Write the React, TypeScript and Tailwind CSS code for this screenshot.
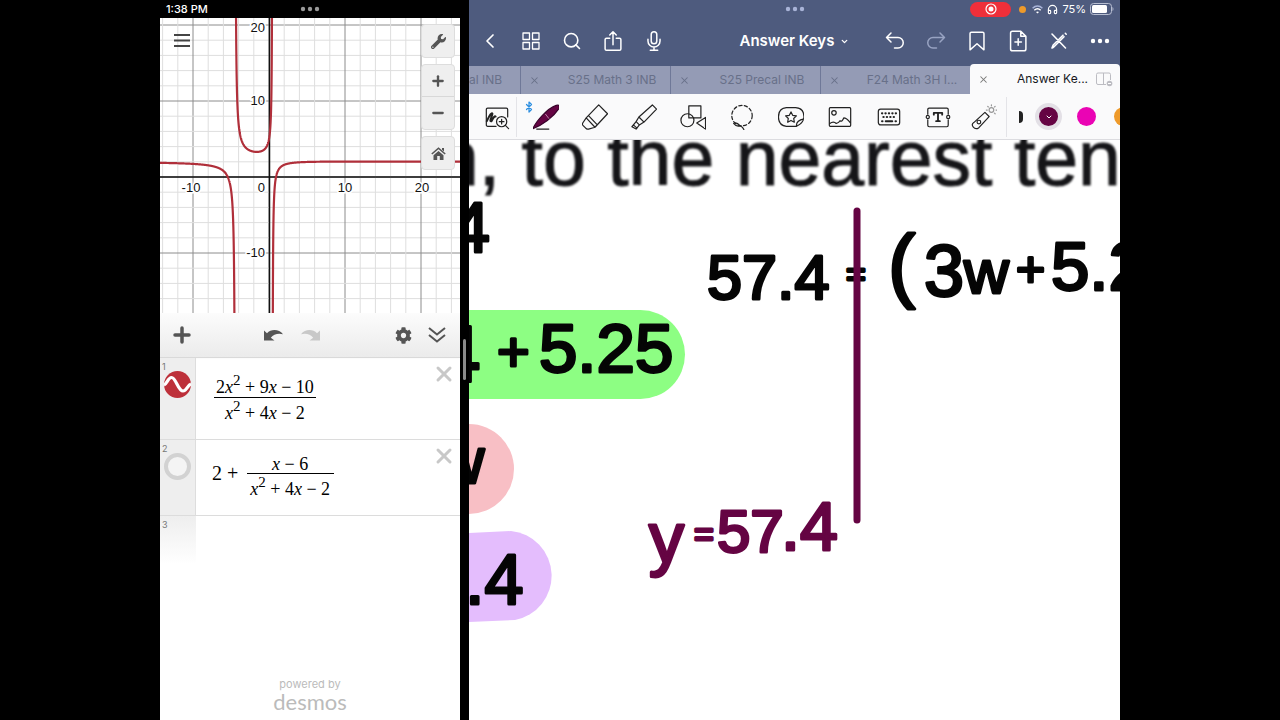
import type { ReactNode } from "react";
import {
  Bluetooth,
  ChevronDown,
  ChevronLeft,
  Headphones,
  Minus,
  Plus,
  Search,
  X,
} from "lucide-react";
import { FaCog, FaWrench } from "react-icons/fa";

// Graph paper: 10 units are 76px, origin sits at (109, 159)
const originX = 109;
const originY = 159;
const unit = 7.6;

const f = (x: number) => (2 * x * x + 9 * x - 10) / (x * x + 4 * x - 2);

function branch(from: number, to: number) {
  const points: string[] = [];
  for (let x = from; x <= to; x += 0.01) {
    const y = f(x);
    if (Math.abs(y) > 40) continue;
    points.push(`${(originX + x * unit).toFixed(2)},${(originY - y * unit).toFixed(2)}`);
  }
  return points.join(" ");
}

const branches = [branch(-15, -4.46), branch(-4.44, 0.44), branch(0.46, 26)];
const steps = Array.from({ length: 31 }, (_, i) => i - 10);

const labels = [
  { text: "20", x: 105, y: 14, anchor: "end" },
  { text: "10", x: 105, y: 87, anchor: "end" },
  { text: "-10", x: 105, y: 239, anchor: "end" },
  { text: "0", x: 105, y: 174, anchor: "end" },
  { text: "-10", x: 31, y: 174, anchor: "middle" },
  { text: "10", x: 185, y: 174, anchor: "middle" },
  { text: "20", x: 262, y: 174, anchor: "middle" },
] as const;

function Graph() {
  return (
    <svg viewBox="0 0 300 295" className="block w-full bg-white">
      {steps.map((i) => {
        const major = i % 5 === 0;
        const gx = originX + i * 2 * unit;
        const gy = originY + i * 2 * unit;
        return (
          <g key={i} stroke={major ? "#8c8c8c" : "#dedede"} strokeWidth="1">
            <line x1={gx} x2={gx} y1="0" y2="295" />
            <line x1="0" x2="300" y1={gy} y2={gy} />
          </g>
        );
      })}
      <line x1={originX + 0.5} x2={originX + 0.5} y1="0" y2="295" stroke="#111" strokeWidth="1.5" />
      <line x1="0" x2="300" y1={originY} y2={originY} stroke="#111" strokeWidth="1.5" />
      {labels.map((l) => (
        <text
          key={`${l.text}${l.x}${l.y}`}
          x={l.x}
          y={l.y}
          textAnchor={l.anchor}
          className="font-['Liberation_Sans'] text-[13px]"
          fill="#111"
          stroke="#fff"
          strokeWidth="3"
          paintOrder="stroke"
        >
          {l.text}
        </text>
      ))}
      {branches.map((points, i) => (
        <polyline key={i} points={points} fill="none" stroke="#b02f3a" strokeWidth="2.2" />
      ))}
    </svg>
  );
}

function GraphButton({ label, children }: { label: string; children: ReactNode }) {
  return (
    <button aria-label={label} className="flex h-8 w-8 items-center justify-center text-[#555]">
      {children}
    </button>
  );
}

function CurvedArrow({ flip = false, color }: { flip?: boolean; color: string }) {
  return (
    <svg width="20" height="12" viewBox="0 0 20 12">
      <path
        d={
          flip
            ? "M20 1.500V11.500H9.500L13.200 8.700C10.500 5.300 6 3.800 1 5.200C5 -.2 13 -.3 17 4.200Z"
            : "M0 1.500V11.500H10.500L6.800 8.700C9.500 5.300 14 3.800 19 5.200C15 -.2 7 -.3 3 4.200Z"
        }
        fill={color}
      />
    </svg>
  );
}

function Calculator() {
  return (
    <section className="flex min-h-screen flex-col bg-white">
      <header className="grid h-[18px] grid-cols-[1fr_auto_1fr] items-center bg-black px-1.5 text-[11px] font-medium text-white">
        <span>1:38 PM</span>
        <MoreDots className="text-[#999]" />
      </header>

      <div className="relative">
        <Graph />
        <button aria-label="Menu" className="absolute left-3.5 top-4">
          <svg width="16" height="13" viewBox="0 0 16 13" stroke="#444" strokeWidth="2">
            <path d="M0 1h16M0 6.500h16M0 12h16" />
          </svg>
        </button>
        <div className="absolute right-[5px] top-1.5 flex flex-col gap-1.5">
          <div className="rounded border border-[#ddd] bg-[#efefef]">
            <GraphButton label="Graph settings">
              <FaWrench size={15} />
            </GraphButton>
          </div>
          <div className="divide-y divide-[#d8d8d8] rounded border border-[#ddd] bg-[#efefef]">
            <GraphButton label="Zoom in">
              <Plus size={16} strokeWidth={3.5} />
            </GraphButton>
            <GraphButton label="Zoom out">
              <Minus size={16} strokeWidth={3.5} />
            </GraphButton>
          </div>
          <div className="rounded border border-[#ddd] bg-[#efefef]">
            <GraphButton label="Default view">
              <svg width="15" height="13" viewBox="0 0 15 13">
                <path d="M.8 7 7.500 1.200 14.200 7" fill="none" stroke="#555" strokeWidth="1.600" />
                <path d="M11 1h2v3.500l-2-1.700ZM7.500 4 2.500 8.300V13h3.700V9h2.600v4h3.700V8.300Z" fill="#555" />
              </svg>
            </GraphButton>
          </div>
        </div>
      </div>

      <div className="flex h-[45px] items-center border-b border-[#d9d9d9] bg-linear-to-b from-[#fcfcfc] to-[#ebebeb] px-2.5 text-[#555] shadow-[0_-2px_4px_rgba(0,0,0,0.15)]">
        <div className="flex flex-1">
          <button aria-label="Add item">
            <Plus size={24} strokeWidth={3.5} />
          </button>
        </div>
        <div className="flex gap-4 pr-8">
          <button aria-label="Undo">
            <CurvedArrow color="#555" />
          </button>
          <button aria-label="Redo">
            <CurvedArrow flip color="#c8c8c8" />
          </button>
        </div>
        <div className="flex flex-1 items-center justify-end gap-4 pr-1">
          <button aria-label="Settings">
            <FaCog size={17} />
          </button>
          <button aria-label="Hide list">
            <svg width="18" height="16" viewBox="0 0 18 16" fill="none" stroke="#555" strokeWidth="2">
              <path d="m1 1 8 6.500L17 1M1 8l8 6.500L17 8" />
            </svg>
          </button>
        </div>
      </div>

      <ol>
        <Expression number={1} icon={<CurveIcon />}>
          <Fraction
            top={
              <>
                2<Squared /> + 9<i>x</i> − 10
              </>
            }
            bottom={
              <>
                <Squared /> + 4<i>x</i> − 2
              </>
            }
          />
        </Expression>
        <Expression
          number={2}
          icon={<span className="block size-[27px] rounded-full border-4 border-[#d2d2d2] bg-[#f4f4f4]" />}
        >
          <span className="mr-1.5 text-xl leading-9">2 +</span>
          <Fraction
            short
            top={
              <>
                <i>x</i> − 6
              </>
            }
            bottom={
              <>
                <Squared /> + 4<i>x</i> − 2
              </>
            }
          />
        </Expression>
        <li className="flex h-12 text-[#777]">
          <span className="w-9 bg-linear-to-b from-[#eee] to-white px-0.5 py-0.5 text-[9px]">3</span>
        </li>
      </ol>

      <footer className="mt-auto flex flex-col items-center pb-2 text-[#bbb]">
        <span className="text-[11px] leading-4">powered by</span>
        <span className="font-['Lato'] text-[22px] leading-5">desmos</span>
      </footer>
    </section>
  );
}

function Squared() {
  return (
    <>
      <i>x</i>
      <sup className="-top-2 text-[15px] leading-none">2</sup>
    </>
  );
}

function Fraction({ top, bottom, short = false }: { top: ReactNode; bottom: ReactNode; short?: boolean }) {
  return (
    <span className="mx-1 inline-flex flex-col items-center whitespace-nowrap text-lg">
      <span className={short ? "h-[18px] leading-[18px]" : "h-6 leading-7"}>{top}</span>
      <span className="h-px w-[104%] bg-black" />
      <span className="h-6 px-0.5 leading-[30px]">{bottom}</span>
    </span>
  );
}

function CurveIcon() {
  return (
    <svg width="27" height="27" viewBox="0 0 27 27">
      <circle cx="13.500" cy="13.500" r="13.500" fill="#bd303a" />
      <path
        d="M0 14C3 13 4 6.500 7.500 6.500C12 6.500 14 20 19 20C23 20 23.500 14 27 13"
        fill="none"
        stroke="#fff"
        strokeWidth="3.200"
      />
    </svg>
  );
}

function Expression({ number, icon, children }: { number: number; icon: ReactNode; children: ReactNode }) {
  return (
    <li className="flex border-b border-[#dcdcdc]">
      <div className="relative w-9 shrink-0 border-r border-[#ddd] bg-[#eee] pl-1 pt-[13px]">
        <span className="absolute left-0.5 top-0.5 text-[9px] text-[#777]">{number}</span>
        <button aria-label={`Toggle expression ${number}`} className="block">
          {icon}
        </button>
      </div>
      <div className="flex flex-1 items-start pb-[17px] pl-4 pt-[15px] font-['Liberation_Serif'] text-black">
        {children}
      </div>
      <button aria-label={`Delete expression ${number}`} className="mr-1 mt-1 self-start text-[#c8c8c8]">
        <X size={24} strokeWidth={3} />
      </button>
    </li>
  );
}

function MoreDots({ className = "" }: { className?: string }) {
  return (
    <svg width="20" height="6" viewBox="0 0 20 6" fill="currentColor" className={className}>
      <circle cx="3" cy="3" r="2.200" />
      <circle cx="10" cy="3" r="2.200" />
      <circle cx="17" cy="3" r="2.200" />
    </svg>
  );
}

// Line icon on a 28px grid, drawn in the current text colour
function Line({ children, size = 28, width = 1.3 }: { children: ReactNode; size?: number; width?: number }) {
  return (
    <svg
      width={size}
      height={size}
      viewBox="0 0 28 28"
      fill="none"
      stroke="currentColor"
      strokeWidth={width}
      strokeLinecap="round"
      strokeLinejoin="round"
    >
      {children}
    </svg>
  );
}

function NavButton({ label, children }: { label: string; children: ReactNode }) {
  return (
    <button aria-label={label} className="flex h-9 w-[41px] items-center justify-center">
      {children}
    </button>
  );
}

function StatusBar() {
  return (
    <div className="grid h-[18px] grid-cols-[1fr_auto_1fr] items-center">
      <MoreDots className="col-start-2 text-[#a9b4d8]" />
      <div className="flex items-center justify-end gap-1 pr-1.5 text-[11px]">
        <span className="mr-1 flex h-[15px] w-[41px] items-center justify-center rounded-full bg-[#ef2f3a]">
          <svg width="12" height="12" viewBox="0 0 12 12">
            <circle cx="6" cy="6" r="5" fill="none" stroke="#fff" strokeWidth="1.200" />
            <circle cx="6" cy="6" r="2.500" fill="#fff" />
          </svg>
        </span>
        <span className="mr-0.5 size-[7px] rounded-full bg-[#ee9a2a]" />
        <svg width="11" height="9" viewBox="0 0 11 9" fill="none" stroke="#fff" strokeWidth="1.500">
          <path d="M.6 3.200C3.500.4 7.500.4 10.400 3.200" stroke="#a9b4d8" />
          <path d="M2.300 5.200C4.200 3.500 6.800 3.500 8.700 5.200" />
          <path d="M4 6.900 5.500 8.500 7 6.900C6 6.200 5 6.200 4 6.900Z" fill="#fff" stroke="none" />
        </svg>
        <Headphones size={11} strokeWidth={2.5} />
        <span>75%</span>
        <svg width="24" height="12" viewBox="0 0 24 12">
          <rect x=".5" y=".5" width="21" height="11" rx="3" fill="none" stroke="#b8bfd2" />
          <rect x="2" y="2" width="15" height="8" rx="1.500" fill="#fff" />
          <path d="M22.500 4v4c1.300-.6 1.300-3.400 0-4Z" fill="#b8bfd2" />
        </svg>
      </div>
    </div>
  );
}

function NavBar() {
  return (
    <nav className="grid h-[46px] grid-cols-[1fr_auto_1fr] items-center">
      <div className="flex">
        <NavButton label="Back">
          <ChevronLeft size={24} strokeWidth={1.7} />
        </NavButton>
        <NavButton label="Thumbnails">
          <Line>
            <rect x="6" y="6" width="6.500" height="6.500" />
            <rect x="15.500" y="6" width="6.500" height="6.500" />
            <rect x="6" y="15.500" width="6.500" height="6.500" />
            <rect x="15.500" y="15.500" width="6.500" height="6.500" />
          </Line>
        </NavButton>
        <NavButton label="Search">
          <Search size={20} strokeWidth={1.9} />
        </NavButton>
        <NavButton label="Share">
          <Line size={26} width={1.6}>
            <path d="M10.500 11H7Q5.500 11 5.500 12.500V22.500Q5.500 24 7 24H21Q22.500 24 22.500 22.500V12.500Q22.500 11 21 11H17.500M14 18V4M10.500 7.500 14 4l3.500 3.500" />
          </Line>
        </NavButton>
        <NavButton label="Record">
          <Line size={26} width={1.6}>
            <rect x="11" y="4" width="6" height="13" rx="3" />
            <path d="M7.500 12v2a6.500 6.500 0 0 0 13 0v-2M14 20.500V24M10 24h8" />
          </Line>
        </NavButton>
      </div>
      <button className="flex items-center gap-1.5 text-[15px] font-semibold">
        Answer Keys
        <ChevronDown size={9} strokeWidth={3.5} />
      </button>
      <div className="flex justify-end">
        <NavButton label="Undo">
          <Line width={1.5}>
            <path d="M10 6 5.500 10.500 10 15M5.500 10.500H17a5 5 0 0 1 0 10.500H13.500" />
          </Line>
        </NavButton>
        <NavButton label="Redo">
          <span className="text-[#98a3c2]">
            <Line width={1.5}>
              <path d="M18 6l4.500 4.500L18 15M22.500 10.500H11a5 5 0 0 0 0 10.500h3.500" />
            </Line>
          </span>
        </NavButton>
        <NavButton label="Bookmark">
          <Line size={26} width={1.6}>
            <path d="M8 4.500h12q1.500 0 1.500 1.500v17.500L14 17l-7.500 6.500V6q0-1.500 1.500-1.500Z" />
          </Line>
        </NavButton>
        <NavButton label="Add page">
          <Line size={26} width={1.6}>
            <path d="M8 3.500h9l5.500 5.500V22.500a2 2 0 0 1-2 2H8a2 2 0 0 1-2-2V5.500a2 2 0 0 1 2-2ZM17 3.500v5.500h5.500M14.200 11.500v7M10.700 15h7" />
          </Line>
        </NavButton>
        <NavButton label="Read only">
          <Line width={1.6}>
            <path d="M7 7 20.500 21M7 21l1.200-3L18 8.200M8.500 20.200 19 9.700M7 21l1.500-.8M20.300 6.300l.9.9" />
          </Line>
        </NavButton>
        <NavButton label="More">
          <MoreDots />
        </NavButton>
      </div>
    </nav>
  );
}

const tabs = ["S25 Math 3 INB", "S25 Precal INB", "F24 Math 3H I..."];

function TabBar() {
  return (
    <div className="flex h-[30px] items-end justify-end overflow-hidden text-xs text-[#687089]">
      <button className="h-7 min-w-[50px] flex-1 whitespace-nowrap bg-[#949bb5] text-left">al INB</button>
      {tabs.map((tab) => (
        <div key={tab} className="flex h-7 w-[150px] shrink-0 items-center border-l border-[#6f7898] bg-[#949bb5]">
          <button aria-label={`Close ${tab}`} className="pl-2">
            <X size={11} strokeWidth={2.2} />
          </button>
          <button className="flex-1 whitespace-nowrap pl-3.5 text-center">{tab}</button>
        </div>
      ))}
      <div className="flex h-[30px] w-[150px] shrink-0 items-center rounded-t bg-[#fafafb] text-[#16181d]">
        <button aria-label="Close Answer Keys" className="pl-2 text-[#777]">
          <X size={11} strokeWidth={2.2} />
        </button>
        <button className="flex-1 whitespace-nowrap pl-5 text-center">Answer Ke...</button>
        <button aria-label="Split view" className="w-6 text-[#bcbcc2]">
          <svg width="17" height="15" viewBox="0 0 17 15" fill="none" stroke="currentColor">
            <path d="M10 12.500H2A1.500 1.500 0 0 1 .5 11V2.500A1.500 1.500 0 0 1 2 1h11a1.500 1.500 0 0 1 1.500 1.500V8M7.500 1v11.500" />
            <circle cx="13.500" cy="11.500" r="2.800" fill="currentColor" stroke="none" />
            <path d="M12 11.500h3" stroke="#fff" />
          </svg>
        </button>
      </div>
    </div>
  );
}

const tools = [
  {
    label: "Pen",
    art: (
      <>
        <path d="M0 26.500C3 19 15 5 25 1.500C29 .5 29 3 27.500 5.500C22 14 10 23 0 26.500Z" fill="#650443" stroke="#38022a" />
        <path d="m13.500 11 3.500 4.500" stroke="#c58bb0" strokeWidth="1" />
        <path d="M4 27H17" />
      </>
    ),
  },
  {
    label: "Eraser",
    art: <path d="M18 1 27.500 10.500 14 25 4.500 15ZM7 12.500 16.500 22.500M4.500 15 .8 20.500Q0 22 1 23L4 26Q5 27.500 7 27L14 25" />,
  },
  {
    label: "Highlighter",
    art: <path d="M23 1 27.500 5.500 14 19.500 8.500 14ZM8.500 14 5.500 19 9 22.500 14 19.500M5.500 19 1 24.500 5.500 27 9 22.500M2.500 22.500l4 3.500" />,
  },
  {
    label: "Shapes",
    art: (
      <>
        <rect x="9.500" y="2" width="13" height="13" />
        <circle cx="8" cy="17.500" r="7" fill="#fafafb" />
        <path d="M9.500 11v4h5M27.500 14.500v12.500L18 20.500Z" />
      </>
    ),
  },
  {
    label: "Lasso",
    art: (
      <>
        <circle cx="14" cy="12.500" r="11" strokeDasharray="3.500 2.500" />
        <path d="M12 23.500Q8 19 5 21Q8 25 12 23.500Q15 25 16 27.500" />
      </>
    ),
  },
  {
    label: "Elements",
    art: (
      <path d="M9 4H19Q28 4.500 28 14Q27.500 20.500 20 24H9Q.5 23 .5 14Q.5 5 9 4ZM20 24Q19 18 28 16M14 8.500l1.800 3.700 4 .6-2.900 2.800.7 4-3.600-1.900-3.600 1.900.7-4-2.900-2.800 4-.6Z" />
    ),
  },
  {
    label: "Image",
    art: (
      <>
        <rect x="2.500" y="4" width="23" height="20" rx="1" />
        <circle cx="7.500" cy="9.500" r="2.400" />
        <path d="M3 21q4-3 7 0 3-1 4-3 2 2 4-3 3 0 7 5" />
      </>
    ),
  },
  {
    label: "Keyboard",
    art: (
      <>
        <rect x="2.500" y="5.500" width="23" height="17" rx="2.500" />
        <path d="M6.500 10h15M8 14h13" strokeWidth="2.400" strokeDasharray=".2 3.500" />
        <path d="M6.500 18.500h.5M10.500 18.500h7M21 18.500h.5" strokeWidth="2.200" />
      </>
    ),
  },
  {
    label: "Text",
    art: (
      <>
        <path d="M3 11V6Q3 4.500 4.500 4.500h19Q25 4.500 25 6V11M3 17v6Q3 24.500 4.500 24.500h19q1.500 0 1.500-1.500V17" />
        <circle cx="3" cy="14" r="1.700" />
        <circle cx="25" cy="14" r="1.700" />
        <path d="M9.500 11.500V9.500h9v2M14 9.500v9M12 18.500h4" strokeWidth="2" />
      </>
    ),
  },
  {
    label: "Laser pointer",
    art: (
      <>
        <path d="M15 9 19.500 13.500 8.500 25.500Q5 28 2.500 25 0 22 3 20Z" />
        <circle cx="8.500" cy="19.500" r="2" />
        <g stroke="#999">
          <circle cx="22" cy="6.500" r="2.500" />
          <path d="M22 1v1M27 6.500h1M26 2.500l-.7.7M18 2.500l.7.700M26 10.500l-.7-.7M16.500 6.500h1" />
        </g>
      </>
    ),
  },
];

function Toolbar() {
  return (
    <div className="flex h-[46px] items-center overflow-hidden border-b border-[#dcdce0] bg-[#fafafb] text-[#222]">
      <button
        aria-label="Zoom window"
        className="flex h-10 w-12 shrink-0 items-center justify-center border-r border-[#e4e4e8] pl-2"
      >
        <Line size={26}>
          <path d="M13 24H4Q2.500 24 2.500 22.500V6Q2.500 4.500 4 4.500h20Q25.500 4.500 25.500 6V14" />
          <path d="M3 18.500Q8 8 9 10.500C9 13 5 19.500 8 18.500Q11 12.500 12.500 13.500" strokeWidth="2.200" />
          <circle cx="19" cy="19" r="5.500" />
          <path d="m23 23 3.500 3.500M19 16.500v5M16.500 19h5" />
        </Line>
      </button>
      <div className="flex h-10 shrink-0 border-r border-[#e4e4e8] pl-1">
        {tools.map((tool) => (
          <button
            key={tool.label}
            aria-label={tool.label}
            className="relative flex w-[49px] items-center justify-center last:w-[44px]"
          >
            {tool.label === "Pen" && (
              <Bluetooth size={12} strokeWidth={2.5} className="absolute left-0.5 top-1 text-[#2d8fe0]" />
            )}
            <Line size={26}>{tool.art}</Line>
          </button>
        ))}
      </div>
      <div className="flex shrink-0 items-center pl-3">
        <button aria-label="Black" className="h-3 w-1 rounded-r-full bg-[#222]" />
        <button
          aria-label="Plum"
          className="ml-3 flex size-[27px] items-center justify-center rounded-full border-4 border-[#e3e0e6] bg-[#650443] text-white"
        >
          <ChevronDown size={8} strokeWidth={3} />
        </button>
        <button aria-label="Pink" className="ml-[15px] size-[19px] rounded-full bg-[#ea04b4]" />
        <button aria-label="Orange" className="ml-[18px] size-[19px] rounded-full bg-[#ee9a2a]" />
      </div>
    </div>
  );
}

const ink = [
  { text: "4", x: -18, y: 112, size: 70 },
  { text: "57.4", x: 238, y: 159, size: 63 },
  { text: "=", x: 377, y: 146, size: 34 },
  { text: "(", x: 419, y: 152, size: 82 },
  { text: "3", x: 455, y: 156, size: 72 },
  { text: "w", x: 495, y: 153, size: 62 },
  { text: "+", x: 547, y: 146, size: 50 },
  { text: "5.2", x: 582, y: 150, size: 69 },
  { text: "4", x: -33, y: 241, size: 80 },
  { text: "+", x: 28, y: 231, size: 56 },
  { text: "5.25", x: 70, y: 232, size: 69 },
  { text: "w", x: -31, y: 343, size: 64 },
  { text: ".4", x: -4, y: 464, size: 70 },
];

const plumInk = [
  { text: "y", x: 180, y: 422, size: 70 },
  { text: "=", x: 225, y: 406, size: 34 },
  { text: "57", x: 248, y: 412, size: 60 },
  { text: ".4", x: 312, y: 410, size: 68 },
];

function Page() {
  return (
    <div className="min-h-0 flex-1 overflow-hidden bg-white font-['Liberation_Sans']">
      <svg viewBox="0 0 651 580" preserveAspectRatio="xMinYMin slice" className="block h-full w-full">
        <text x="-33" y="45" fontSize="77" fill="#151518" stroke="#151518" strokeWidth="1" className="blur-[1px]">
          n, to the nearest ten
        </text>
        <rect x="-60" y="170" width="276" height="89" rx="44.500" fill="#8dfe83" />
        <circle cx="0" cy="329" r="45" fill="#f8bfc5" />
        <path d="M0 393 42 391A45 45 0 0 1 46 480L0 482Z" fill="#e4bdfd" />
        <g fill="#050505" stroke="#050505" strokeWidth="3" strokeLinejoin="round">
          {ink.map((t) => (
            <text key={`${t.x} ${t.y}`} x={t.x} y={t.y} fontSize={t.size}>
              {t.text}
            </text>
          ))}
        </g>
        <g fill="#650443" stroke="#650443" strokeWidth="3" strokeLinejoin="round">
          {plumInk.map((t) => (
            <text key={`${t.x} ${t.y}`} x={t.x} y={t.y} fontSize={t.size}>
              {t.text}
            </text>
          ))}
        </g>
        <line x1="388" x2="388" y1="71" y2="380" stroke="#650443" strokeWidth="7" strokeLinecap="round" />
      </svg>
    </div>
  );
}

function Notebook() {
  return (
    <section className="flex h-screen min-w-0 flex-col bg-[#4e5b7e] text-white">
      <StatusBar />
      <NavBar />
      <TabBar />
      <Toolbar />
      <Page />
    </section>
  );
}

export default function App() {
  return (
    <div className="min-h-screen bg-black px-[12.5%] font-['Inter',sans-serif]">
      <main className="relative grid grid-cols-[300px_minmax(0,1fr)] gap-[9px]">
        <Calculator />
        <Notebook />
        <span className="absolute left-[303px] top-[339px] h-[41px] w-[3px] rounded-full bg-[#8a8a8a]" />
      </main>
    </div>
  );
}
